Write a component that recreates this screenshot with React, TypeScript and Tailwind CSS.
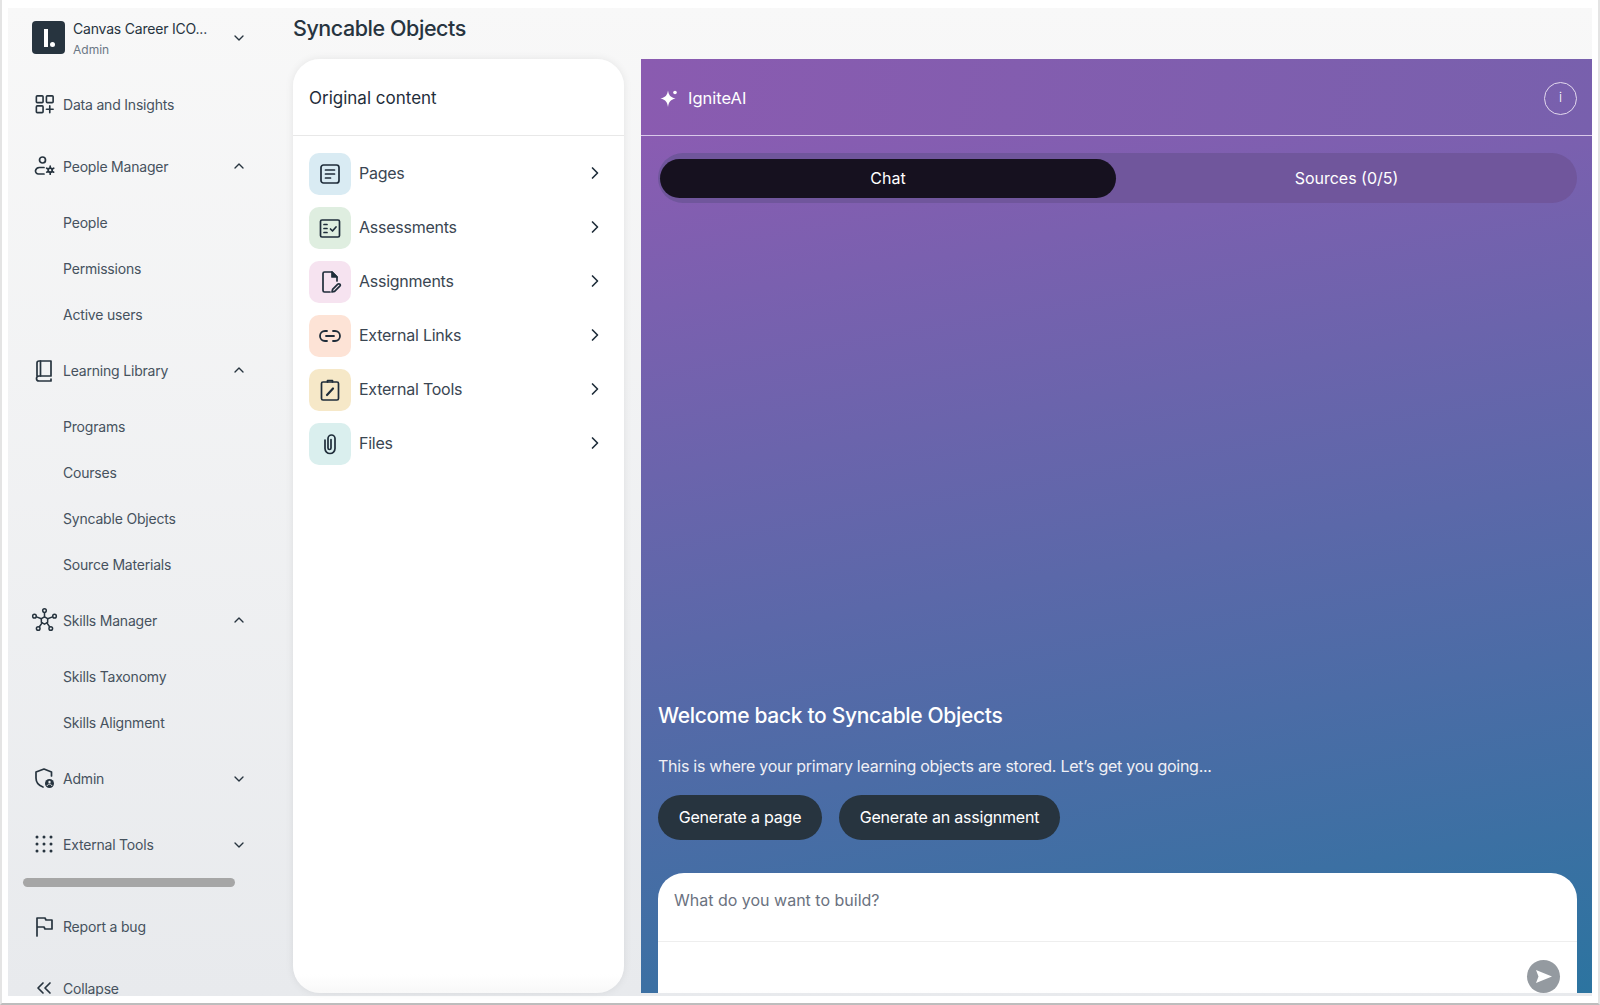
import { ChevronDown, ChevronRight, ChevronUp, ChevronsLeft, Link2 } from "lucide-react";
import type { ReactNode } from "react";

function Svg({ size = 24, children }: { size?: number; children: ReactNode }) {
  return (
    <svg
      width={size}
      height={size}
      viewBox="0 0 24 24"
      fill="none"
      stroke="currentColor"
      strokeWidth="1.7"
      strokeLinecap="round"
      strokeLinejoin="round"
    >
      {children}
    </svg>
  );
}

// sidebar icons
const DataIcon = () => (
  <Svg size={23}>
    <rect x="3.5" y="3" width="7" height="7" rx="1" />
    <rect x="14" y="3" width="7" height="7" rx="1" />
    <rect x="3.5" y="13.5" width="7" height="7" rx="1" />
    <path d="M17.5 13.5v7M14 17h7" />
  </Svg>
);

const PeopleIcon = () => (
  <Svg>
    <circle cx="10.500" cy="6" r="3" />
    <path d="M12 13.500H7.500a4 4 0 0 0-4 3.200 3 3 0 0 0 3 3.300H12" />
    <circle cx="18.200" cy="16.200" r="2" />
    <path d="M18.200 12.200v1.600M18.200 18.600v1.600M14.700 14.200l1.400.8M20.300 17.400l1.400.8M14.700 18.200l1.400-.8M20.300 15l1.400-.8" />
  </Svg>
);

const BookIcon = () => (
  <Svg>
    <path d="M5 18V5a2 2 0 0 1 2-2h12v15H7a2.500 2.500 0 0 0 0 5h12v-2" />
    <path d="M8.500 3v15" />
  </Svg>
);

const SkillsIcon = () => (
  <Svg size={29}>
    <path d="M12 9l2.600 1.500v3L12 15l-2.600-1.500v-3z" strokeWidth="1.250" />
    <path d="M12 9V5.500M14.600 10.500l4-1.500M9.400 10.500l-4-1.500M14 14l2.200 3.200M10 14l-2.200 3.200" strokeWidth="1.250" />
    <circle cx="12" cy="3.800" r="1.500" strokeWidth="1.250" />
    <circle cx="20.300" cy="8.400" r="1.500" strokeWidth="1.250" />
    <circle cx="3.700" cy="8.400" r="1.500" strokeWidth="1.250" />
    <circle cx="17.200" cy="18.600" r="1.500" strokeWidth="1.250" />
    <circle cx="6.800" cy="18.600" r="1.500" strokeWidth="1.250" />
  </Svg>
);

const AdminIcon = () => (
  <Svg>
    <path d="M19.500 10V6l-7.500-3-8 3v6c0 4.500 3 7.600 7 9" />
    <circle cx="17.500" cy="17.500" r="4.500" fill="currentColor" stroke="none" />
    <circle cx="17.500" cy="16" r="1.200" fill="#eceef0" stroke="none" />
    <path d="M15.200 19.500c.5-1 1.300-1.400 2.300-1.400s1.800.4 2.300 1.400" stroke="#eceef0" strokeWidth="1" />
  </Svg>
);

const DotsIcon = () => (
  <svg width="24" height="24" viewBox="0 0 24 24" fill="currentColor">
    {[5, 12, 19].map((y) =>
      [5, 12, 19].map((x) => <circle key={`${x}-${y}`} cx={x} cy={y} r="1.500" />)
    )}
  </svg>
);

const FlagIcon = () => (
  <Svg>
    <path d="M5 22V4h8l1 2h6v9h-7l-1-2H5" />
  </Svg>
);

// list icons
const PagesIcon = () => (
  <Svg>
    <rect x="3" y="3" width="18" height="18" rx="2.500" />
    <path d="M7.500 8h9M7.500 12h9M7.500 16h5" />
  </Svg>
);

const AssessmentIcon = () => (
  <Svg>
    <rect x="2.500" y="4" width="19" height="17" rx="1.500" />
    <path d="M6 8.500h3M6 12.500h3M6 16.500h3M12.500 13l2 2 3.500-4" />
  </Svg>
);

const AssignmentIcon = () => (
  <Svg>
    <path d="M12 22H6.500A1.500 1.500 0 0 1 5 20.500v-17A1.500 1.500 0 0 1 6.500 2H14l5 5v4" />
    <path d="M14 2v5h5z" fill="currentColor" />
    <path d="M14 22l.6-2.600 5.200-5.200a1.400 1.400 0 0 1 2 2l-5.200 5.200z" />
  </Svg>
);

const ToolIcon = () => (
  <Svg>
    <rect x="3.500" y="4" width="17" height="18" rx="1.500" />
    <path d="M9.500 4V2.500h5V4" />
    <path d="M9 17l6-6.500" strokeWidth="2.200" />
  </Svg>
);

const ClipIcon = () => (
  <Svg>
    <path d="M7 8v8.500a5 5 0 0 0 10 0V6.500a3.500 3.500 0 0 0-7 0V16a1.500 1.500 0 0 0 3 0V7.500" />
  </Svg>
);

type NavGroup = {
  label: string;
  icon: ReactNode;
  open?: boolean;
  children?: string[];
};

const navGroups: NavGroup[] = [
  { label: "People Manager", icon: <PeopleIcon />, open: true, children: ["People", "Permissions", "Active users"] },
  { label: "Learning Library", icon: <BookIcon />, open: true, children: ["Programs", "Courses", "Syncable Objects", "Source Materials"] },
  { label: "Skills Manager", icon: <SkillsIcon />, open: true, children: ["Skills Taxonomy", "Skills Alignment"] },
  { label: "Admin", icon: <AdminIcon /> },
  { label: "External Tools", icon: <DotsIcon /> },
];

const contentTypes = [
  { label: "Pages", bg: "bg-[#d9ebf3]", icon: <PagesIcon /> },
  { label: "Assessments", bg: "bg-[#dfeee0]", icon: <AssessmentIcon /> },
  { label: "Assignments", bg: "bg-[#f6e3f0]", icon: <AssignmentIcon /> },
  { label: "External Links", bg: "bg-[#fde3d6]", icon: <Link2 size={24} strokeWidth={1.8} /> },
  { label: "External Tools", bg: "bg-[#f6e8c8]", icon: <ToolIcon /> },
  { label: "Files", bg: "bg-[#daefee]", icon: <ClipIcon /> },
];

function NavRow({ icon, label, open, height }: { icon: ReactNode; label: string; open?: boolean; height: string }) {
  return (
    <div className={`flex items-center ${height}`}>
      <div className="flex w-[55px] shrink-0 items-center justify-center pl-[17px] text-[#27343f]">{icon}</div>
      <span className="text-[14px] tracking-[-0.2px] text-[#46525e]">{label}</span>
      {open === undefined ? null : open ? (
        <span className="ml-auto mr-[46px] text-[#27343f]">
          <ChevronUp size={16} strokeWidth={2} />
        </span>
      ) : (
        <span className="ml-auto mr-[46px] mt-[2px] text-[#27343f]">
          <ChevronDown size={16} strokeWidth={2} />
        </span>
      )}
    </div>
  );
}

function Sidebar() {
  return (
    <aside className="flex h-full w-[285px] shrink-0 flex-col overflow-hidden">
      {/* Account */}
      <div className="flex h-[67px] shrink-0 items-start pl-[24px] pt-[13px]">
        <div className="flex h-[33px] w-[33px] items-center justify-center rounded bg-[#27343f]">
          <svg width="33" height="33" viewBox="0 0 33 33" fill="#fff">
            <rect x="12" y="8" width="4" height="18" />
            <circle cx="20.500" cy="23.500" r="2.500" />
          </svg>
        </div>
        <div className="ml-[8px] flex flex-col">
          <span className="mt-[-2px] text-[14px] leading-[20px] tracking-[-0.2px] text-[#27343f]">Canvas Career ICO...</span>
          <span className="mt-[3px] text-[12px] leading-[16px] text-[#6b7785]">Admin</span>
        </div>
        <span className="ml-auto mr-[46px] mt-[9px] text-[#27343f]">
          <ChevronDown size={16} strokeWidth={2} />
        </span>
      </div>

      <NavRow icon={<DataIcon />} label="Data and Insights" height="h-[58px] shrink-0" />

      {navGroups.map((group) => (
        <div key={group.label} className="shrink-0">
          <NavRow icon={group.icon} label={group.label} open={!!group.open} height="h-[66px]" />
          {group.children?.map((child) => (
            <div key={child} className="flex h-[46px] items-center pl-[55px] text-[14px] tracking-[-0.2px] text-[#46525e]">
              {child}
            </div>
          ))}
        </div>
      ))}

      <div className="ml-[15px] mt-px h-[9px] w-[212px] shrink-0 rounded-full bg-[#a6a6a6]" />

      <div className="mt-[6px] shrink-0">
        <NavRow icon={<FlagIcon />} label="Report a bug" height="h-[66px]" />
      </div>
      <div className="flex h-[58px] shrink-0 items-center">
        <div className="flex w-[55px] shrink-0 justify-center pl-[17px] text-[#27343f]">
          <ChevronsLeft size={24} strokeWidth={1.7} />
        </div>
        <span className="text-[14px] tracking-[-0.2px] text-[#46525e]">Collapse</span>
      </div>
    </aside>
  );
}

function ContentCard() {
  return (
    <section className="flex h-full w-[331px] shrink-0 flex-col rounded-[27px] bg-gradient-to-b from-white from-98% to-[#f8f8f8] shadow-[0_0_8px_rgba(0,0,0,0.08)]">
      <div className="flex h-[77px] shrink-0 items-center border-b border-[#e8e8e8] px-4 pt-[3px] text-[17px] text-[#1f2d3a]">
        Original content
      </div>
      <ul className="flex flex-col gap-[12px] pl-4 pr-[19px] pt-[17px]">
        {contentTypes.map((item) => (
          <li key={item.label} className="flex items-center">
            <div className={`flex h-[42px] w-[42px] items-center justify-center rounded-[10px] text-[#1f2d3a] ${item.bg}`}>
              {item.icon}
            </div>
            <span className="ml-[8px] pb-[2px] text-[16px] tracking-[-0.25px] text-[#3a4652]">{item.label}</span>
            <ChevronRight size={20} strokeWidth={2} className="mb-[2px] ml-auto text-[#1f2d3a]" />
          </li>
        ))}
      </ul>
    </section>
  );
}

function AiPanel() {
  return (
    <section className="flex h-full min-w-0 flex-1 flex-col overflow-hidden text-white">
      <header className="flex h-[77px] shrink-0 items-center justify-between border-b border-[#d9c9ea] bg-[linear-gradient(100deg,#8a5bb0,#7860ad)] pl-[19px] pr-[15px] pt-[2px]">
        <div className="flex items-center gap-[10px]">
          <svg width="18" height="19" viewBox="0 0 18 19" fill="#fff">
            <path d="M8 1.500C8.800 6 10 8 15.500 9.500 10 11 8.800 13 8 18 7.200 13 6 11 .5 9.500 6 8 7.200 6 8 1.500Z" />
            <circle cx="15" cy="3.500" r="1.800" />
          </svg>
          <span className="text-[16.5px]">IgniteAI</span>
        </div>
        <div className="flex h-[33px] w-[33px] items-center justify-center rounded-full border border-[#e3d9ee] text-[13px] font-light">
          i
        </div>
      </header>

      <div className="flex min-h-0 flex-1 flex-col bg-[linear-gradient(170deg,#8a5cb2,#2c74a0)] pl-[17px] pr-[15px]">
        <div className="mt-[17px] flex h-[50px] shrink-0 items-center rounded-full bg-[#70569c] pl-[2px] text-[16px]">
          <div className="flex h-[39px] w-[456px] items-center justify-center rounded-full bg-[#16111f]">Chat</div>
          <div className="flex flex-1 items-center justify-center">Sources (0/5)</div>
        </div>

        <div className="flex-1" />

        <h2 className="text-[21px] font-medium leading-[28px] tracking-[-0.32px]">Welcome back to Syncable Objects</h2>
        <p className="mt-[24px] text-[16px] leading-[24px] tracking-[-0.26px] text-[#f0f0f5]">
          This is where your primary learning objects are stored. Let’s get you going...
        </p>
        <div className="mt-[17px] flex gap-[17px]">
          <button className="h-[45px] w-[164px] rounded-full bg-[#27343f] pb-[2px] text-[16px] tracking-[-0.2px]">Generate a page</button>
          <button className="h-[45px] w-[221px] rounded-full bg-[#27343f] pb-[2px] text-[16px] tracking-[-0.2px]">Generate an assignment</button>
        </div>

        <div className="mb-[-25px] mt-[33px] h-[145px] shrink-0 rounded-[26px] bg-gradient-to-b from-white from-80% to-[#f6f6f6]">
          <div className="flex h-[69px] items-start border-b border-[#eeeeee] pl-4 pt-[16px] text-[16px] leading-[22px] text-[#6b7280]">
            What do you want to build?
          </div>
          <div className="flex justify-end pr-[17px] pt-[18px]">
            <div className="h-[33px] w-[33px] rounded-full bg-[#949aa0]">
              <svg width="33" height="33" viewBox="0 0 33 33" fill="#fff">
                <path d="M9 10l16 6.500L9 23l2.500-6.500z" />
              </svg>
            </div>
          </div>
        </div>
      </div>
    </section>
  );
}

export default function App() {
  return (
    <div className="h-[1005px] w-[1600px] overflow-hidden border-x-2 border-b-2 border-x-[#e4e4e4] border-b-[#bdbdbd] bg-white px-[6px] pb-[7px] pt-[8px] font-['Inter',sans-serif]">
      <div className="flex h-full bg-gradient-to-b from-[#f8f8f8] to-[#e8eaed]">
        <Sidebar />
        <main className="flex min-w-0 flex-1 flex-col pb-[3px]">
          <h1 className="flex h-[51px] shrink-0 items-start pt-[7px] text-[21.5px] font-medium leading-[26px] tracking-[-0.45px] text-[#27343f]">
            Syncable Objects
          </h1>
          <div className="flex min-h-0 flex-1 gap-[17px]">
            <ContentCard />
            <AiPanel />
          </div>
        </main>
      </div>
    </div>
  );
}
